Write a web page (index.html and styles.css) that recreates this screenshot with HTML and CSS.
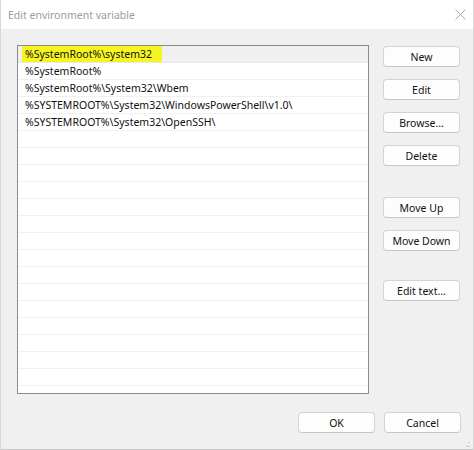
FILE: index.html
```html
<!DOCTYPE html>
<html>
<head>
<meta charset="utf-8">
<link rel="stylesheet" href="styles.css">
</head>
<body>
<div class="window">
  <div class="titlebar">
    <span class="title">Edit environment variable</span>
    <svg class="close" width="11" height="11" viewBox="0 0 11 11"><path d="M0.5 0.5 L10.5 10.5 M10.5 0.5 L0.5 10.5" stroke="#a8a8a8" stroke-width="1" fill="none"/></svg>
  </div>
  <div class="content">
    <div class="main">
      <div class="list">
        <div class="row selected"><span class="hl">%SystemRoot%\system32</span></div>
        <div class="row">%SystemRoot%</div>
        <div class="row">%SystemRoot%\System32\Wbem</div>
        <div class="row">%SYSTEMROOT%\System32\WindowsPowerShell\v1.0\</div>
        <div class="row">%SYSTEMROOT%\System32\OpenSSH\</div>
        <div class="row"></div><div class="row"></div><div class="row"></div>
        <div class="row"></div><div class="row"></div><div class="row"></div>
        <div class="row"></div><div class="row"></div><div class="row"></div>
        <div class="row"></div><div class="row"></div><div class="row"></div>
        <div class="row"></div><div class="row"></div><div class="row"></div>
        <div class="row"></div>
      </div>
      <div class="side">
        <button class="btn">New</button>
        <button class="btn">Edit</button>
        <button class="btn">Browse...</button>
        <button class="btn">Delete</button>
        <button class="btn gap">Move Up</button>
        <button class="btn">Move Down</button>
        <button class="btn gap2">Edit text...</button>
      </div>
    </div>
    <div class="footer">
      <button class="btn">OK</button>
      <button class="btn">Cancel</button>
    </div>
    <div class="grip">.:</div>
  </div>
</div>
</body>
</html>
```
FILE: styles.css
```css
html, body { margin: 0; padding: 0; }
body {
  width: 474px; height: 450px; overflow: hidden;
  font-family: "Noto Sans", "Liberation Sans", sans-serif;
  font-size: 10.5px; color: #000;
  background: #f0f0f0;
}
.window {
  width: 474px; height: 450px; box-sizing: border-box;
  border-left: 1px solid #d8d8d8; border-right: 1px solid #d8d8d8; border-bottom: 1px solid #c8c8c8;
  display: flex; flex-direction: column; position: relative;
}
.titlebar {
  height: 29px; background: #ffffff; display: flex; align-items: center;
  justify-content: space-between; padding: 0 7px 0 7px; flex: none;
}
.title { color: #9c9c9c; font-size: 10.5px; }
.content { flex: 1; display: flex; flex-direction: column; padding: 16px 12px 0 16px; }
.main { display: flex; gap: 14px; }
.list {
  width: 350px; height: 347px; border: 1px solid #8c8c8c; background: #fff;
  overflow: hidden; box-sizing: content-box;
}
.row {
  height: 16px; border-bottom: 1px solid #f0f0f0; line-height: 16px;
  padding-left: 7px; white-space: nowrap; color: #111;
}
.row.selected { background: #f0f0f0; border-bottom-color: #e8e8e8; }
.hl { background: #f7f520; padding: 1px 10px 1px 3px; margin-left: -3px; }
.side { display: flex; flex-direction: column; padding-top: 1px; }
.btn {
  width: 77px; height: 21px; box-sizing: border-box;
  border: 1px solid #d3d3d3; border-bottom-color: #c6c6c6; border-radius: 4px;
  background: #fdfdfd; font-family: inherit; font-size: 10.5px; color: #111;
  padding: 0; margin-bottom: 12px; line-height: 18px;
}
.side .btn.gap { margin-top: 19px; }
.side .btn.gap2 { margin-top: 17px; }
.footer { display: flex; justify-content: flex-end; gap: 9px; margin-top: 18px; }
.footer .btn { margin: 0; }
.grip { position: absolute; right: 3px; bottom: 1px; font-size: 8px; color: #999; line-height: 8px; }
```
